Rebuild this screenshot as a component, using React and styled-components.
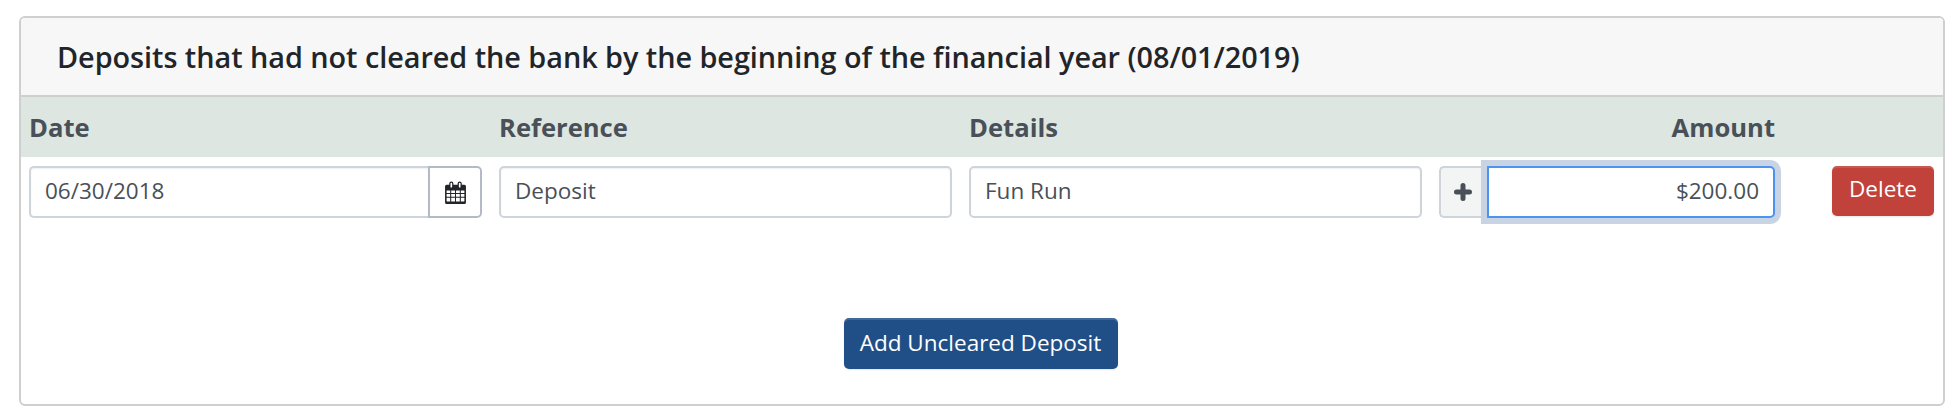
import React from "react";
import styled, { createGlobalStyle } from "styled-components";

const GlobalStyle = createGlobalStyle`
  html, body {
    margin: 0;
    background: #fff;
    font-family: "Open Sans", "Liberation Sans", sans-serif;
  }
`;

const Page = styled.div`
  width: 1960px;
  height: 420px;
  padding: 16px 15px 14px 19px;
  box-sizing: border-box;
  overflow: hidden;
`;

const Card = styled.section`
  height: 390px;
  border: 2px solid #cfcfcf;
  border-radius: 6px;
  box-sizing: border-box;
  display: flex;
  flex-direction: column;
  overflow: hidden;
`;

const CardHeader = styled.h2`
  margin: 0;
  height: 79px;
  flex: none;
  display: flex;
  align-items: center;
  box-sizing: border-box;
  padding: 0 0 0 36px;
  background: #f7f7f7;
  border-bottom: 2px solid #cfcfcf;
  color: #212529;
  font-size: 28.8px;
  font-weight: 600;
  letter-spacing: -0.03px;
  white-space: nowrap;
`;

const columns = "453px 453px 453px 336px 1fr";

const HeadRow = styled.div`
  display: grid;
  grid-template-columns: ${columns};
  column-gap: 17px;
  height: 60px;
  flex: none;
  align-items: center;
  box-sizing: border-box;
  padding: 1px 9px 0 8px;
  background: #dde6e1;
  color: #495057;
  font-size: 25.6px;
  font-weight: 700;
`;

const HeadCell = styled.div`
  text-align: ${(p) => p.$align || "left"};
`;

const BodyRow = styled.div`
  display: grid;
  grid-template-columns: ${columns};
  column-gap: 17px;
  align-items: start;
  padding: 9px 9px 0 8px;
`;

const InputGroup = styled.div`
  display: flex;
  height: 52px;
`;

const Input = styled.input`
  flex: 1;
  min-width: 0;
  width: 100%;
  height: 52px;
  box-sizing: border-box;
  padding: 0 14px 3px;
  border: 2px solid #ced4da;
  border-radius: 5px;
  background: #fff;
  color: #495057;
  font: 400 22.5px "Open Sans", sans-serif;
  outline: none;
  box-shadow: inset 0 1px 2px rgba(0, 0, 0, 0.06);
`;

const DateInput = styled(Input)`
  border-radius: 5px 0 0 5px;
  border-right: 0;
`;

const CalendarButton = styled.span`
  flex: none;
  width: 54px;
  box-sizing: border-box;
  display: flex;
  align-items: center;
  justify-content: center;
  border: 2px solid #b4bac5;
  border-radius: 0 5px 5px 0;
  background: #fff;
`;

const PlusAddon = styled.span`
  flex: none;
  width: 48px;
  box-sizing: border-box;
  display: flex;
  align-items: center;
  justify-content: center;
  padding-right: 3px;
  border: 2px solid #ced4da;
  border-right: 0;
  border-radius: 5px 0 0 5px;
  background: #f2f5f3;
`;

const AmountInput = styled(Input)`
  position: relative;
  text-align: right;
  border-color: #4a94f0;
  border-radius: 0 5px 5px 0;
  box-shadow: 0 0 0 6px #c8d4e4;
`;

const DeleteButton = styled.button`
  justify-self: end;
  width: 102px;
  height: 50px;
  padding: 0 0 5px;
  border: 0;
  border-radius: 5px;
  background: #c1423a;
  color: #fff;
  font: 400 22.5px "Open Sans", sans-serif;
  box-shadow: inset 0 2px 0 rgba(255, 255, 255, 0.12), 0 1px 2px rgba(0, 0, 0, 0.1);
`;

const Footer = styled.div`
  flex: 1;
  display: flex;
  justify-content: center;
  padding: 100px 3px 0 0;
`;

const AddButton = styled.button`
  width: 274px;
  height: 51px;
  padding: 0 0 3px;
  border: 0;
  border-radius: 5px;
  background: #204f87;
  color: #fff;
  font: 400 22.5px "Open Sans", sans-serif;
  box-shadow: inset 0 2px 0 rgba(255, 255, 255, 0.15), 0 1px 2px rgba(0, 0, 0, 0.1);
`;

const CalendarIcon = () => (
  <svg width="21" height="23" viewBox="0 0 20 22">
    <path
      fill="#212529"
      fillRule="evenodd"
      d="M1.5 3.5H4V2.5a2 2 0 0 1 4 0v1h4v-1a2 2 0 0 1 4 0v1h2.5A1.5 1.5 0 0 1 20 5v15.5a1.5 1.5 0 0 1-1.5 1.5h-17A1.5 1.5 0 0 1 0 20.5V5a1.5 1.5 0 0 1 1.5-1.5zM5.2 2.5v3a.8.8 0 0 0 1.6 0v-3a.8.8 0 0 0-1.6 0zm8 0v3a.8.8 0 0 0 1.6 0v-3a.8.8 0 0 0-1.6 0zM1.5 9v2.5h3.4V9zm4.4 0v2.5h3.6V9zm4.6 0v2.5h3.6V9zm4.6 0v2.5h3.4V9zM1.5 12.5V15h3.4v-2.5zm4.4 0V15h3.6v-2.5zm4.6 0V15h3.6v-2.5zm4.6 0V15h3.4v-2.5zM1.5 16v3.2c0 .2.1.3.3.3h3.1V16zm4.4 0v3.5h3.6V16zm4.6 0v3.5h3.6V16zm4.6 0v3.5h3.1c.2 0 .3-.1.3-.3V16z"
    />
  </svg>
);

const PlusIcon = () => (
  <svg width="18" height="18" viewBox="0 0 18 18">
    <path stroke="#495057" strokeWidth="5" strokeLinecap="round" d="M9 2.5v13M2.5 9h13" />
  </svg>
);

export default function App() {
  return (
    <Page>
      <GlobalStyle />
      <Card>
        <CardHeader>
          Deposits that had not cleared the bank by the beginning of the financial year (08/01/2019)
        </CardHeader>
        <HeadRow>
          <HeadCell>Date</HeadCell>
          <HeadCell>Reference</HeadCell>
          <HeadCell>Details</HeadCell>
          <HeadCell $align="right">Amount</HeadCell>
          <HeadCell />
        </HeadRow>
        <BodyRow>
          <InputGroup>
            <DateInput defaultValue="06/30/2018" />
            <CalendarButton>
              <CalendarIcon />
            </CalendarButton>
          </InputGroup>
          <Input defaultValue="Deposit" />
          <Input defaultValue="Fun Run" />
          <InputGroup>
            <PlusAddon>
              <PlusIcon />
            </PlusAddon>
            <AmountInput defaultValue="$200.00" />
          </InputGroup>
          <DeleteButton>Delete</DeleteButton>
        </BodyRow>
        <Footer>
          <AddButton>Add Uncleared Deposit</AddButton>
        </Footer>
      </Card>
    </Page>
  );
}
